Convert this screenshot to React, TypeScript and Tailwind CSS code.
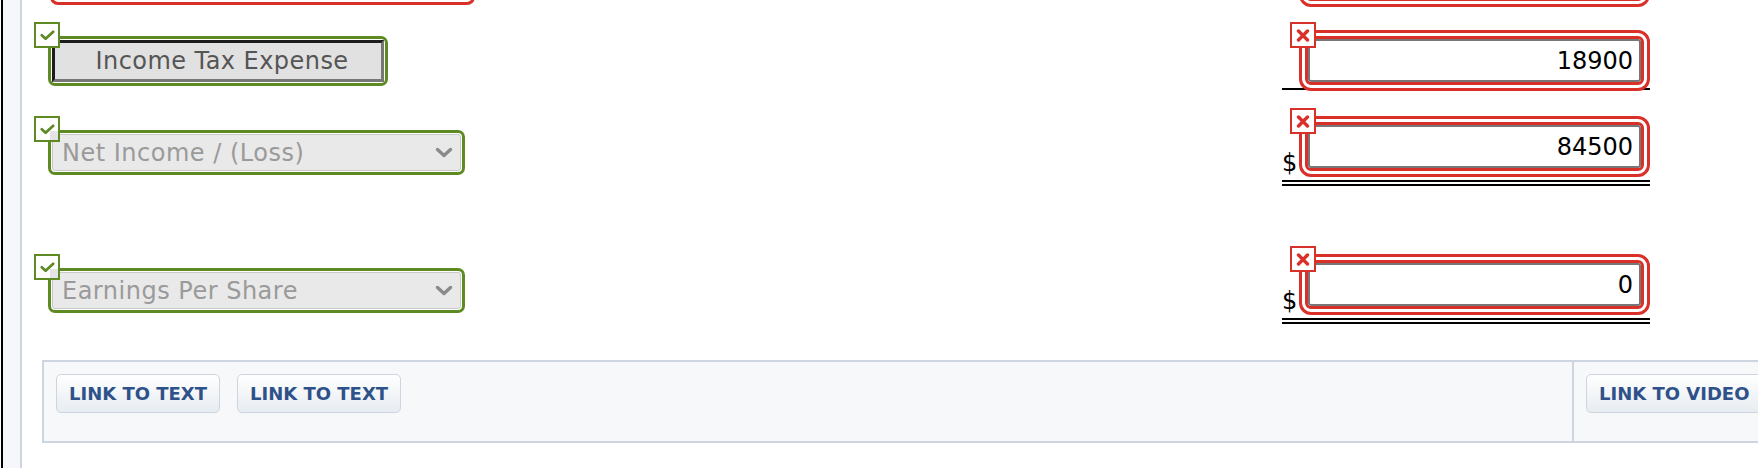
import type { ReactNode } from "react";

function CheckBadge({ overSelect }: { overSelect?: boolean }) {
  return (
    <div className="absolute -left-[14px] -top-[14px] z-10 flex h-[26px] w-[26px] items-center justify-center border-2 border-[#5e8a24] bg-white">
      <svg width="15" height="11" viewBox="0 0 15 11">
        <path d="M1.8 5.2 L5.6 8.8 L13.2 1.8" fill="none" stroke="#5e8a24" strokeWidth="2.7" strokeLinecap="round" strokeLinejoin="round" />
      </svg>
      {overSelect && <div className="absolute bottom-0 right-0 h-[9px] w-[8px] bg-[#e4e4e4]" />}
    </div>
  );
}

function CrossBadge() {
  return (
    <div className="absolute -left-[9px] -top-[8px] z-10 flex h-[26px] w-[26px] items-center justify-center border-2 border-[#d9302a] bg-white">
      <svg width="14" height="13" viewBox="0 0 14 13">
        <path d="M2.5 2 L11.5 11 M11.5 2 L2.5 11" stroke="#d9302a" strokeWidth="3.4" strokeLinecap="round" />
      </svg>
    </div>
  );
}

function ValueBox({ value }: { value: string }) {
  return (
    <div className="relative">
      <CrossBadge />
      <div className="rounded-[12px] border-[9px] border-double border-[#d9302a] bg-white">
        <div className="flex h-[43px] w-[333px] items-center justify-end rounded-[3px] border-2 border-[#777] pr-[6px] text-[24px] text-black">
          {value}
        </div>
      </div>
    </div>
  );
}

function SelectBox({ label }: { label: string }) {
  return (
    <div className="relative">
      <CheckBadge overSelect />
      <div className="rounded-[7px] border-[3px] border-[#5e8a24] p-px">
        <div className="flex h-[37px] w-[409px] items-center justify-between rounded-[3px] border border-[#c9c9c9] bg-[#e9e9e9] pl-[9px] pr-[7px] text-[24px] tracking-[0.5px] text-[#9a9a9a]">
          <span>{label}</span>
          <svg width="18" height="11" viewBox="0 0 18 11">
            <path d="M2.5 2.5 L9 8.5 L15.5 2.5" fill="none" stroke="#8a8a8a" strokeWidth="3.4" strokeLinecap="round" strokeLinejoin="round" />
          </svg>
        </div>
      </div>
    </div>
  );
}

function LinkButton({ children }: { children: ReactNode }) {
  return (
    <button className="flex h-[39px] items-center rounded-[5px] border border-[#cdd6e0] bg-linear-to-b from-white to-[#e7ecf1] px-[12px] text-[18px] font-bold text-[#2e5189]">
      {children}
    </button>
  );
}

export default function App() {
  return (
    <div className="flex h-[468px] w-full overflow-hidden bg-white font-['DejaVu_Sans',Verdana,sans-serif]">
      {/* window edge + side strip */}
      <div className="ml-px w-[2px] bg-black" />
      <div className="w-[19px] border-r-2 border-[#cdd5e0] bg-[#f5f7fa]" />

      <div className="flex min-w-0 flex-1 flex-col">
        {/* tail of previous row */}
        <div className="flex h-[8px] shrink-0 items-start overflow-hidden pl-[26px]">
          <div className="w-[1234px]">
            <div className="-mt-[40px] ml-[2px] h-[45px] w-[425px] rounded-[8px] border-[3px] border-[#d9302a]" />
          </div>
          <div className="w-[368px]">
            <div className="-mt-[54px] ml-[17px] h-[61px] w-[351px] rounded-[12px] border-[9px] border-double border-[#d9302a]" />
          </div>
        </div>

        {/* income tax */}
        <div className="flex shrink-0 items-start pl-[26px]">
          <div className="w-[1234px] pt-[28px]">
            <div className="relative w-fit">
              <CheckBadge />
              <div className="rounded-[7px] border-[3px] border-[#5e8a24] p-px">
                <div className="flex h-[42px] w-[332px] items-center justify-center border-[3px] border-t-[#1c1c1c] border-l-[#1c1c1c] border-b-[#777] border-r-[#777] bg-[#e1e1e1] pl-[8px] text-[24px] tracking-[0.45px] text-[#555]">
                  Income Tax Expense
                </div>
              </div>
            </div>
          </div>
          <div className="flex w-[368px] items-end border-b-2 border-black pt-[22px]">
            <span className="w-[17px]" />
            <div className="-mb-[3px]">
              <ValueBox value="18900" />
            </div>
          </div>
        </div>

        {/* net income */}
        <div className="flex shrink-0 items-start pl-[26px]">
          <div className="w-[1234px] pt-[40px]">
            <div className="w-fit">
              <SelectBox label="Net Income / (Loss)" />
            </div>
          </div>
          <div className="flex w-[368px] items-end border-b-[6px] border-double border-black pb-[3px] pt-[26px]">
            <span className="mb-[2px] w-[17px] text-[24px] leading-none text-black">$</span>
            <ValueBox value="84500" />
          </div>
        </div>

        {/* eps */}
        <div className="flex shrink-0 items-start pl-[26px]">
          <div className="w-[1234px] pt-[82px]">
            <div className="w-fit">
              <SelectBox label="Earnings Per Share" />
            </div>
          </div>
          <div className="flex w-[368px] items-end border-b-[6px] border-double border-black pb-[3px] pt-[68px]">
            <span className="mb-[2px] w-[17px] text-[24px] leading-none text-black">$</span>
            <ValueBox value="0" />
          </div>
        </div>

        {/* links */}
        <div className="ml-[20px] mt-[36px] flex h-[83px] w-[1800px] shrink-0 border-2 border-[#cdd5e0] bg-[#f6f8fa]">
          <div className="flex w-[1530px] items-start gap-[17px] border-r-2 border-[#cdd5e0] pl-[12px] pt-[12px]">
            <LinkButton>LINK TO TEXT</LinkButton>
            <LinkButton>LINK TO TEXT</LinkButton>
          </div>
          <div className="pl-[12px] pt-[12px]">
            <LinkButton>LINK TO VIDEO</LinkButton>
          </div>
        </div>
      </div>
    </div>
  );
}
